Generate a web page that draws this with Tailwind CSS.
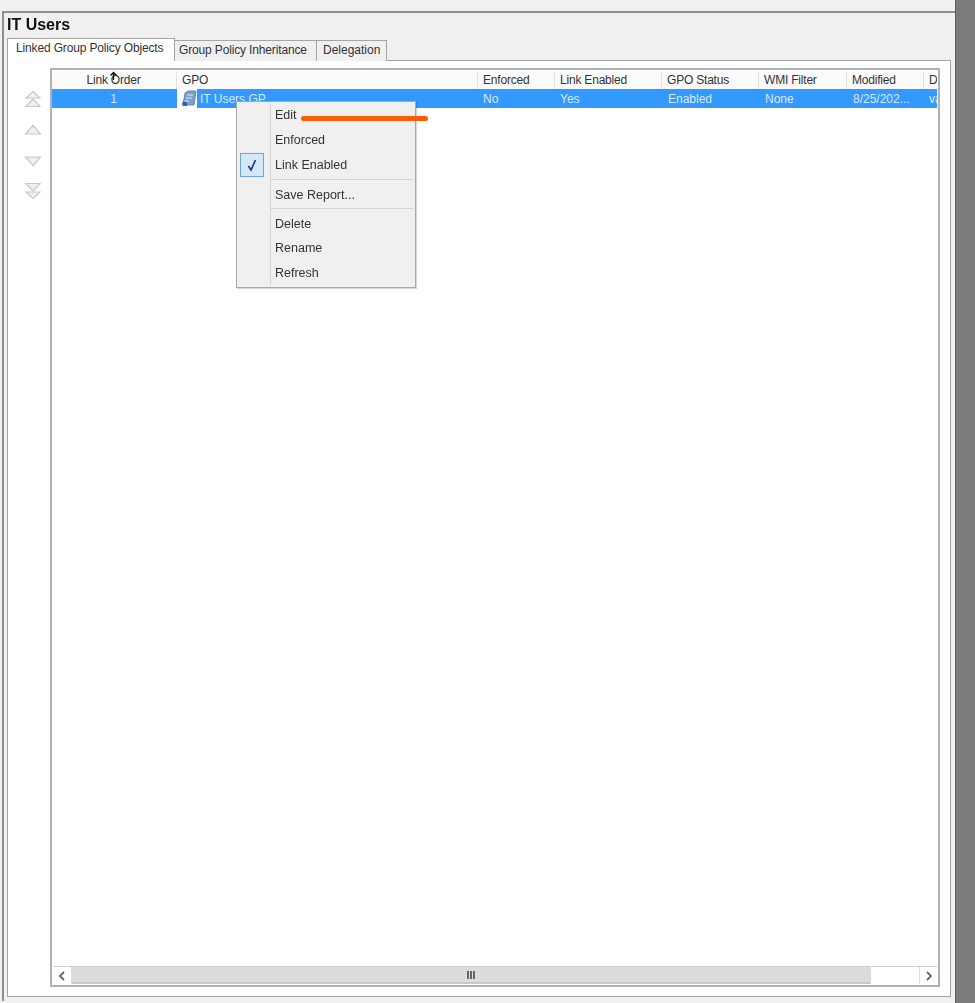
<!DOCTYPE html>
<html lang="en">
<head>
    <meta charset="UTF-8">
    <title>IT Users</title>
    <script src="https://cdn.jsdelivr.net/npm/@tailwindcss/browser@4"></script>
</head>
<body class="bg-[#f0f0f0] overflow-hidden">
    <div class="w-[975px] h-[1003px] flex font-['Liberation_Sans',sans-serif] text-[12px] text-[#333] blur-[0.5px]">
        <!-- main pane -->
        <div class="w-[955px] h-full pt-[11px]">
            <div class="h-[990px] w-[953px] ml-[2px] border-t-2 border-l-2 border-[#8f8f8f] pl-[3px] pr-[3px] flex flex-col">
                <h1 class="font-bold text-[16px] leading-[18px] mt-[3px] text-[#111]">IT Users</h1>

                <!-- tabs -->
                <div class="flex items-end h-[23px] mt-[4px] relative z-10">
                    <div class="w-[168px] h-[23px] bg-white border border-b-0 border-[#a5a5a5] pl-[8px] leading-[19px] tracking-[-0.15px]">Linked Group Policy Objects</div>
                    <div class="w-[142px] h-[21px] bg-[#f0f0f0] border border-l-0 border-b-0 border-[#a5a5a5] pl-[4px] leading-[18px] tracking-[-0.15px]">Group Policy Inheritance</div>
                    <div class="w-[70px] h-[21px] bg-[#f0f0f0] border border-l-0 border-b-0 border-[#a5a5a5] pl-[6px] leading-[18px]">Delegation</div>
                </div>

                <!-- tab panel -->
                <div class="h-[937px] w-[944px] mt-[-1px] bg-white border border-[#a5a5a5] flex pt-[7px] shrink-0">
                    <!-- move buttons -->
                    <div class="w-[42px] flex flex-col items-center pt-[22px] pl-[8px]">
                        <svg class="w-[18px] h-[18px]" viewBox="0 0 18 18" fill="#f0f0f0" stroke="#c8c8c8" stroke-width="1.2"><path d="M9 1.5 16 8H2Z"/><path d="M9 9 16 16.5H2Z"/></svg>
                        <svg class="w-[18px] h-[12px] mt-[16px]" viewBox="0 0 18 12" fill="#f0f0f0" stroke="#c8c8c8" stroke-width="1.2"><path d="M9 1.5 16.5 10H1.5Z"/></svg>
                        <svg class="w-[18px] h-[12px] mt-[19px]" viewBox="0 0 18 12" fill="#f0f0f0" stroke="#c8c8c8" stroke-width="1.2"><path d="M1.5 2H16.5L9 10.5Z"/></svg>
                        <svg class="w-[18px] h-[18px] mt-[15px]" viewBox="0 0 18 18" fill="#f0f0f0" stroke="#c8c8c8" stroke-width="1.2"><path d="M2 1.5H16L9 9Z"/><path d="M2 10H16L9 16.5Z"/></svg>
                    </div>

                    <!-- list -->
                    <div class="w-[890px] h-[919px] border-2 border-[#b0b0b8] pt-[1px] pr-[1px] pb-[1px] flex flex-col relative">
                        <div class="flex h-[18px] bg-[#fbfbfb] tracking-[-0.2px] leading-[18px] shrink-0">
                            <div class="w-[125px] text-center border-r border-[#e4e4e4] pr-[1px]">Link Order</div>
                            <div class="w-[301px] pl-[5px] border-r border-[#e4e4e4]">GPO</div>
                            <div class="w-[77px] pl-[5px] border-r border-[#e4e4e4]">Enforced</div>
                            <div class="w-[107px] pl-[5px] border-r border-[#e4e4e4]">Link Enabled</div>
                            <div class="w-[97px] pl-[5px] border-r border-[#e4e4e4]">GPO Status</div>
                            <div class="w-[88px] pl-[5px] border-r border-[#e4e4e4]">WMI Filter</div>
                            <div class="w-[77px] pl-[5px] border-r border-[#e4e4e4]">Modified</div>
                            <div class="flex-1 pl-[5px] overflow-hidden">D</div>
                        </div>
                        <div class="flex h-[19px] text-[#d8e9fb] leading-[20px] shrink-0">
                            <div class="w-[125px] text-center bg-[#3399ff] pr-[2px]">1</div>
                            <div class="w-[20px] bg-white flex items-center pl-[4px]">
                                <svg class="w-[16px] h-[17px]" viewBox="0 0 16 17"><path d="M4 3 7 1H15L13 15H1L3 9Z" fill="#7aa0cc" stroke="#4d78ad" stroke-width="0.8"/><path d="M6 5H12M5 8H11M4 11H8" stroke="#dfe9f5"/><rect x="2" y="12" width="4" height="4" fill="#2f62b0"/></svg>
                            </div>
                            <div class="w-[281px] bg-[#3399ff] pl-[3px]">IT Users GP</div>
                            <div class="w-[77px] bg-[#3399ff] pl-[5px]">No</div>
                            <div class="w-[107px] bg-[#3399ff] pl-[5px]">Yes</div>
                            <div class="w-[97px] bg-[#3399ff] pl-[6px]">Enabled</div>
                            <div class="w-[88px] bg-[#3399ff] pl-[6px]">None</div>
                            <div class="w-[77px] bg-[#3399ff] pl-[6px]">8/25/202...</div>
                            <div class="w-[13px] bg-[#3399ff] pl-[5px] overflow-hidden">va</div>
                        </div>
                        <div class="flex-1"></div>

                        <!-- horizontal scrollbar -->
                        <div class="flex h-[18px] shrink-0 bg-white border-t border-[#d0d0d0] ml-[1px]">
                            <div class="w-[19px] flex items-center justify-center border-r border-[#dcdcdc]">
                                <svg class="w-[8px] h-[10px]" viewBox="0 0 8 10" fill="none" stroke="#666" stroke-width="1.8"><path d="M6 1 2 5l4 4"/></svg>
                            </div>
                            <div class="w-[798px] bg-[#dcdcdc] border-b-2 border-[#c8c8c8] flex items-center justify-center">
                                <div class="flex gap-[1px]"><i class="block w-[2px] h-[8px] bg-[#666]"></i><i class="block w-[2px] h-[8px] bg-[#666]"></i><i class="block w-[2px] h-[8px] bg-[#666]"></i></div>
                            </div>
                            <div class="flex-1 border-l border-[#dcdcdc]"></div>
                            <div class="w-[18px] flex items-center justify-center border-l border-[#dcdcdc]">
                                <svg class="w-[8px] h-[10px]" viewBox="0 0 8 10" fill="none" stroke="#666" stroke-width="1.8"><path d="M2 1l4 4-4 4"/></svg>
                            </div>
                        </div>
                    </div>
                </div>
            </div>
        </div>

        <!-- dark strip on the right -->
        <div class="w-[20px] h-full bg-[#7b7b7b] border-l border-[#5f5f5f]"></div>

        <!-- context menu -->
        <div class="absolute left-[236px] top-[101px] w-[180px] h-[187px] bg-[#f0f0f0] border border-[#a8a8a8] shadow-[1px_1px_1px_rgba(0,0,0,0.15)] text-[12.5px] flex flex-col pt-[1px] z-20">
            <div class="absolute left-[33px] top-[2px] bottom-[2px] w-px bg-[#d4d4d4]"></div>
            <div class="h-[25px] pl-[38px] leading-[25px]">Edit</div>
            <div class="h-[25px] pl-[38px] leading-[25px]">Enforced</div>
            <div class="h-[25px] pl-[38px] leading-[25px] relative">
                <div class="absolute left-[3px] top-[0px] w-[24px] h-[24px] bg-[#d5e8fa] border border-[#6aa6d8] flex items-center justify-center">
                    <svg class="w-[12px] h-[14px]" viewBox="0 0 12 14" fill="none" stroke="#1f2f8f" stroke-width="1.7"><path d="M2.5 8 5 12 9.5 2"/></svg>
                </div>
                Link Enabled
            </div>
            <div class="h-px bg-[#d4d4d4] ml-[34px] mr-[2px] my-[1px]"></div>
            <div class="h-[24px] mt-[2px] pl-[38px] leading-[24px]">Save Report...</div>
            <div class="h-px bg-[#d4d4d4] ml-[34px] mr-[2px] my-[1px]"></div>
            <div class="h-[24px] mt-[2px] pl-[38px] leading-[24px]">Delete</div>
            <div class="h-[25px] pl-[38px] leading-[25px]">Rename</div>
            <div class="h-[25px] pl-[38px] leading-[25px]">Refresh</div>
        </div>

        <!-- orange annotation under Edit -->
        <div class="absolute left-[301px] top-[116px] w-[127px] h-[5px] rounded-full bg-[#ff5a0a] z-30"></div>

        <!-- mouse cursor over header -->
        <svg class="absolute left-[109px] top-[71px] w-[9px] h-[10px] z-30" viewBox="0 0 9 10" fill="none" stroke="#111" stroke-width="1.3"><path d="M4.5 9V2M1.5 4.5 4.5 1.5l3 3"/></svg>
    </div>
</body>
</html>
